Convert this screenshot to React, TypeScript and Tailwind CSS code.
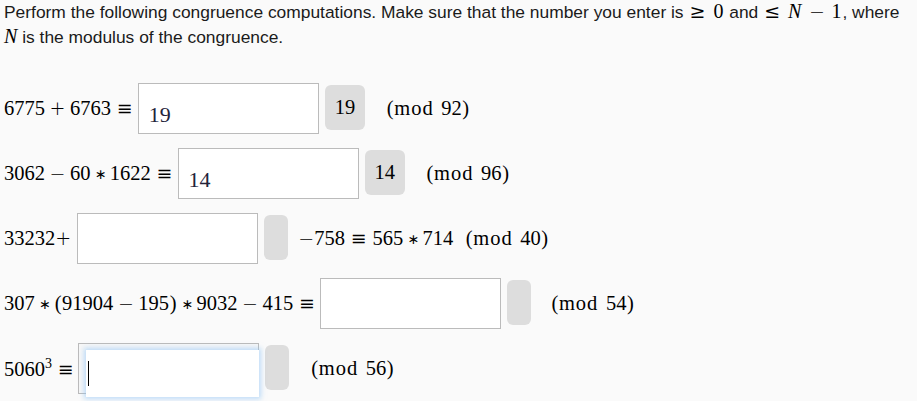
import React from "react";

const MF = "font-['Liberation_Serif','DejaVu_Serif',serif]";
const OF = "font-['DejaVu_Sans','DejaVu_Serif',sans-serif]";

function M({ children, className = "" }: { children: React.ReactNode; className?: string }) {
  return (
    <span className={`${MF} text-[20.5px] leading-none text-black whitespace-nowrap ${className}`}>{children}</span>
  );
}

function OpGlyph({ c }: { c: string }) {
  return <span className={`${OF} font-light text-[19px]`}>{c}</span>;
}

function Bin({ c }: { c: string }) {
  return (
    <span className="inline-block w-[16px] mx-[4.5px] text-center">
      <OpGlyph c={c} />
    </span>
  );
}
function Rel({ c, left = true, right = true }: { c: string; left?: boolean; right?: boolean }) {
  return (
    <span className={`inline-block w-[16px] ${left ? "ml-[5.7px]" : ""} ${right ? "mr-[5.7px]" : ""} text-center`}>
      <OpGlyph c={c} />
    </span>
  );
}
function Star() {
  return (
    <span className={`inline-block w-[10.25px] mx-[4.55px] text-center ${OF} text-[14px] align-[1px]`}>∗</span>
  );
}
function P({ c }: { c: string }) {
  return <span className="inline-block w-[8px] text-center">{c}</span>;
}
function Mod({ n }: { n: string }) {
  return (
    <>
      <P c="(" />
      <span className="tracking-[0.05em]">mod</span>
      <span className="inline-block w-[7.5px]" />
      {n}
      <P c=")" />
    </>
  );
}

function Input({ value, className = "ml-[4px]" }: { value?: string; className?: string }) {
  return (
    <div
      className={`${className} w-[181px] h-[51px] shrink-0 border border-[#bbbbbb] bg-white flex items-center pl-[10px] pt-[12px]`}
    >
      <span className={`${MF} text-[22px] leading-none text-[#23233a]`}>{value}</span>
    </div>
  );
}

function FocusedInput() {
  return (
    <div className="relative ml-[4px] w-[181px] h-[51px] shrink-0 border border-[#bbbbbb] bg-[#f7f7f7]">
      <div className="absolute left-[7px] top-[6px] w-[173px] h-[47px] bg-white shadow-[0_0_5px_2px_rgba(140,195,245,0.55)]">
        <div className="absolute left-[2px] top-[11px] w-[1px] h-[25px] bg-black" />
      </div>
    </div>
  );
}

function Badge({ value }: { value?: string }) {
  return (
    <div
      className={`ml-[6px] mb-[2px] h-[45px] shrink-0 rounded-[6px] bg-[#dddddd] flex items-center justify-center ${
        value ? "px-[10px]" : "w-[24px]"
      }`}
    >
      {value ? <M>{value}</M> : null}
    </div>
  );
}

function Row({ children }: { children: React.ReactNode }) {
  return <div className="flex items-center h-[51px]">{children}</div>;
}

function HOp({ c, className = "" }: { c: string; className?: string }) {
  return (
    <span className={`inline-block w-[18px] text-center leading-[18px] ${className}`}>
      <span className={`${OF} font-light text-[19px]`}>{c}</span>
    </span>
  );
}

export default function App() {
  return (
    <div className="min-h-screen w-full bg-[#fafafa] pl-[4px] overflow-hidden">
      <p className="font-['Liberation_Sans',Arial,sans-serif] text-[17.4px] leading-[25px] text-[#1b1b1b] whitespace-nowrap">
        Perform the following congruence computations. Make sure that the number you enter is{" "}
        <span className={`${MF} text-[20px] leading-[18px] text-black whitespace-nowrap`}>
          <HOp c="≥" className="mr-[7px]" />
          <span className="pr-[1px]">0</span>
        </span>{" "}
        and{" "}
        <span className={`${MF} text-[20px] leading-[18px] text-black whitespace-nowrap`}>
          <HOp c="≤" className="mr-[7px]" />
          <span className="italic pr-[1px]">N</span>
          <HOp c="−" className="mx-[5.5px]" />
          <span className="pr-[1px]">1</span>
        </span>
        , where
        <br />
        <span className={`${MF} text-[20px] leading-[18px] text-black italic`}>N</span> is the modulus of the
        congruence.
      </p>

      <div className="mt-[33px] flex flex-col gap-[14px]">
        <Row>
          <M>
            6775
            <Bin c="+" />
            6763
            <Rel c="≡" right={false} />
          </M>
          <Input value="19" className="ml-[5px]" />
          <Badge value="19" />
          <M className="ml-[21px]">
            <Mod n="92" />
          </M>
        </Row>

        <Row>
          <M>
            3062
            <Bin c="−" />
            60
            <Star />
            1622
            <Rel c="≡" right={false} />
          </M>
          <Input value="14" className="ml-[5px]" />
          <Badge value="14" />
          <M className="ml-[21px]">
            <Mod n="96" />
          </M>
        </Row>

        <Row>
          <M>
            33232
            <span className="inline-block w-[16px] text-center">
              <OpGlyph c="+" />
            </span>
          </M>
          <Input className="ml-[6px]" />
          <Badge />
          <M className="ml-[10px]">
            <span className="inline-block w-[16px] text-center">
              <OpGlyph c="−" />
            </span>
            758
            <Rel c="≡" />
            565
            <Star />
            714
            <span className="inline-block w-[12px]" />
            <Mod n="40" />
          </M>
        </Row>

        <Row>
          <M>
            307
            <Star />
            <P c="(" />
            91904
            <Bin c="−" />
            195
            <P c=")" />
            <Star />
            9032
            <Bin c="−" />
            415
            <Rel c="≡" right={false} />
          </M>
          <Input className="ml-[5px]" />
          <Badge />
          <M className="ml-[20px]">
            <Mod n="54" />
          </M>
        </Row>

        <Row>
          <M>
            5060<span className="text-[14px] align-[8px]">3</span>
            <Rel c="≡" right={false} />
          </M>
          <FocusedInput />
          <Badge />
          <M className="ml-[22px]">
            <Mod n="56" />
          </M>
        </Row>
      </div>
    </div>
  );
}
